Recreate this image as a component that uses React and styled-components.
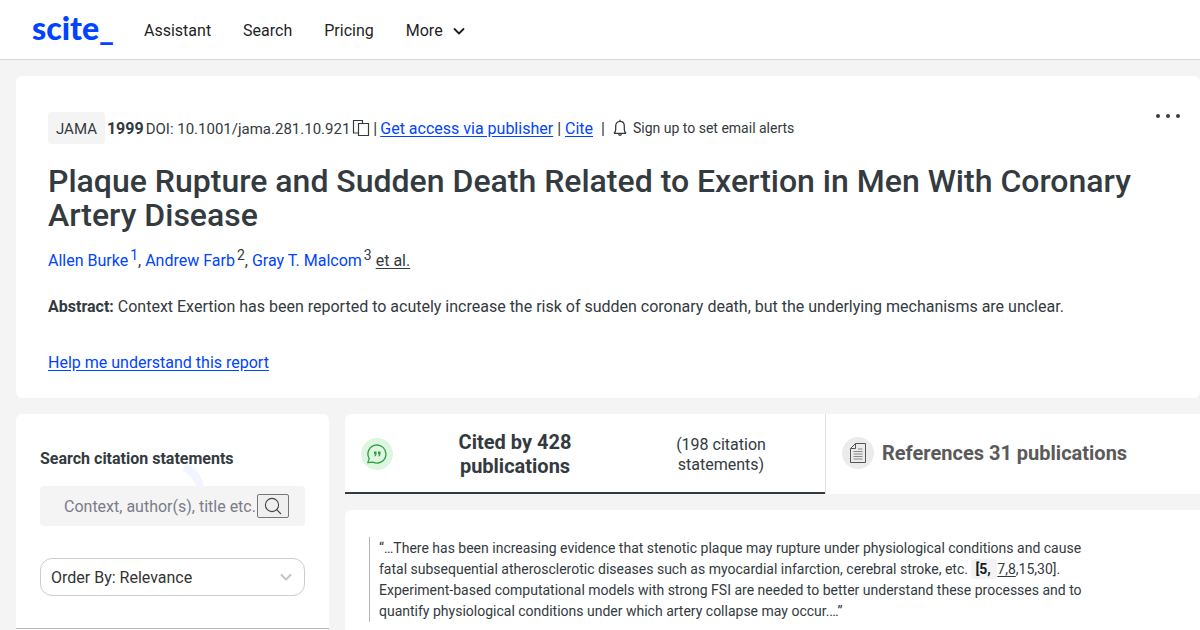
import React from "react";
import styled, { createGlobalStyle, css } from "styled-components";

const GlobalStyle = createGlobalStyle`
  *, *::before, *::after { box-sizing: border-box; }
  body {
    margin: 0;
    background: #f4f4f4;
    color: #333a40;
    font-family: Roboto, "Liberation Sans", Arial, sans-serif;
    font-size: 16px;
    line-height: 24px;
    overflow-x: hidden;
  }
  button, input, select { font: inherit; color: inherit; }
`;

const blue = "#0044ff";

const Header = styled.header`
  display: flex;
  align-items: center;
  height: 60px;
  padding: 0 32px;
  background: #fff;
  border-bottom: 1px solid #d8d8d8;
`;

const Logo = styled.a`
  display: flex;
  width: 80px;
  margin-right: 32px;
  padding-bottom: 4px;
  color: ${blue};
  font: 900 32px/36px Lato, sans-serif;
  text-decoration: none;
`;

const Nav = styled.nav`
  display: flex;
  align-items: center;
  gap: 32px;
  padding-top: 2px;
`;

const navItem = css`
  color: #1f1f1f;
  text-decoration: none;
`;

const NavLink = styled.a`
  ${navItem}
`;

const NavButton = styled.button`
  ${navItem}
  display: flex;
  align-items: center;
  gap: 10px;
  padding: 0;
  border: 0;
  background: none;
`;

const Main = styled.main`
  display: flex;
  flex-direction: column;
  gap: 16px;
  padding: 16px 0 0 16px;
`;

const Paper = styled.article`
  padding: 36px 16px 23px 32px;
  background: #fff;
  border-radius: 6px;
`;

const PaperTop = styled.div`
  display: flex;
  justify-content: space-between;
  align-items: flex-start;
`;

const Meta = styled.div`
  display: flex;
  align-items: baseline;
  gap: 2px;
  white-space: nowrap;

  > button { align-self: center; }
`;

const Journal = styled.span`
  padding: 5px 8px 3px;
  background: #f4f4f4;
  border-radius: 4px;
  font-size: 15px;
`;

const Doi = styled.span`
  font-size: 15px;
`;

const Divider = styled.span`
  margin: 0 ${(p) => p.$space}px;
`;

const IconButton = styled.button`
  display: flex;
  padding: 0;
  border: 0;
  background: none;
`;

const Link = styled.a`
  color: ${(p) => (p.$plain ? "inherit" : blue)};
  text-decoration: ${(p) => (p.$bare ? "none" : "underline")};
  text-underline-offset: 2px;
`;

const AlertButton = styled.button`
  display: flex;
  align-items: center;
  gap: 6px;
  padding: 0;
  border: 0;
  background: none;
  font-size: 14px;
`;

const Title = styled.h1`
  margin: 20px 0 17px;
  font-size: 32px;
  line-height: 34px;
  font-weight: 500;
`;

const Text = styled.p`
  margin: 0 0 ${(p) => p.$after || 0}px;

  sup {
    margin-left: 2px;
    font-size: 14px;
    line-height: 0;
  }
`;

const Columns = styled.div`
  display: grid;
  grid-template-columns: 313px minmax(0, 1fr);
  gap: 16px;
`;

const Sidebar = styled.aside`
  background: #fff;
  border-radius: 6px 6px 0 0;
`;

const Filters = styled.form`
  position: relative;
  padding: 33px 24px 32px;
  border-bottom: 1px solid #b5b5b5;
`;

const Spinner = styled.svg`
  position: absolute;
  left: 124px;
  top: 46px;
`;

const FilterLabel = styled.label`
  position: relative;
  display: block;
  margin-bottom: 15px;
  font-weight: 700;
`;

const SearchBox = styled.div`
  position: relative;
  display: flex;
  align-items: center;
  gap: 2px;
  height: 40px;
  margin-bottom: 32px;
  padding: 0 16px 0 24px;
  background: #f4f4f4;
  border-radius: 4px;

  input {
    flex: 1;
    min-width: 0;
    padding: 2px 0 0;
    border: 0;
    background: none;
    outline: none;
  }
  input::placeholder { color: #7b7b8a; opacity: 1; }

  button {
    display: flex;
    align-items: center;
    justify-content: center;
    width: 32px;
    height: 24px;
    padding: 0;
    border: 1px solid #767676;
    border-radius: 2px;
    background: #efefef;
  }
`;

const SelectBox = styled.div`
  display: grid;
  align-items: center;

  > * { grid-area: 1 / 1; }
  svg { justify-self: end; margin-right: 13px; pointer-events: none; }
`;

const Select = styled.select`
  appearance: none;
  width: 100%;
  height: 38px;
  padding: 2px 32px 0 10px;
  border: 1px solid #ccc;
  border-radius: 12px;
  background: #fff;
  color: #333;
`;

const Results = styled.section`
  display: flex;
  flex-direction: column;
  gap: 16px;
`;

const Tabs = styled.div`
  display: grid;
  grid-template-columns: 480px minmax(0, 1fr);
  height: 80px;
  background: #fff;
  border-radius: 6px 0 0 0;
`;

const Tab = styled.button`
  display: flex;
  align-items: center;
  gap: 8px;
  padding: ${(p) => (p.$active ? "2px 16px 0" : "0 16px 2px")};
  border: 0;
  border-left: ${(p) => (p.$active ? "0" : "1px solid #e0e0e0")};
  border-bottom: ${(p) => (p.$active ? "2px solid #333a40" : "0")};
  background: none;
  color: ${(p) => (p.$active ? "#333a40" : "#5a5a5a")};
`;

const TabIcon = styled.span`
  display: flex;
  align-items: center;
  justify-content: center;
  flex: none;
  width: 32px;
  height: 32px;
  border-radius: 50%;
  background: ${(p) => (p.$green ? "#def5e0" : "#ebebeb")};
`;

const TabTitle = styled.span`
  flex: ${(p) => (p.$wide ? "0 0 228px" : "none")};
  padding: ${(p) => (p.$wide ? "0 52px" : "0")};
  font-size: 20px;
  line-height: 24px;
  font-weight: 700;
`;

const TabNote = styled.span`
  flex: 1;
  padding: 2px 32px 0 28px;
  line-height: 20px;
`;

const Citation = styled.article`
  padding: 27px 24px;
  background: #fff;
  border-radius: 6px 0 0 0;
`;

const Quote = styled.blockquote`
  max-width: 728px;
  margin: 0;
  padding: 1px 0 0 9px;
  border-left: 1px solid #b5b5b5;
  font-size: 14px;
  line-height: 21px;

  mark {
    padding: 2px 3px 2px 4px;
    border-radius: 4px;
    background: #f4f2f2;
    color: #0f1f1c;
    font-weight: 700;
  }
`;

function Chevron({ size, color, width }) {
  return (
    <svg width={size} height={size} viewBox="0 0 12 12" fill="none" stroke={color} strokeWidth={width} strokeLinecap="round" strokeLinejoin="round" aria-hidden="true">
      <path d="M1.5 4 6 8.5 10.5 4" />
    </svg>
  );
}

function CopyIcon() {
  return (
    <svg width="18" height="18" viewBox="0 0 18 18" fill="none" stroke="#333a40" strokeWidth="1.2" aria-hidden="true">
      <path d="M6.5 14H1.5V1.5H10.5V4" />
      <path d="M6.5 4.5H16.5V16.5H6.5Z" />
    </svg>
  );
}

function BellIcon() {
  return (
    <svg width="14" height="18" viewBox="0 0 14 18" fill="none" stroke="#333a40" strokeWidth="1.3" strokeLinejoin="round" aria-hidden="true">
      <path d="M.8 14.300H13.200M1 14.200C2.400 13 2.700 12 2.700 10.500V7C2.700 4.200 4.500 2.300 7 2.300S11.300 4.200 11.300 7V10.500C11.300 12 11.600 13 13 14.200M7 2.300V.8M5.700 14.500C5.700 17 8.300 17 8.300 14.500" />
    </svg>
  );
}

function SearchIcon() {
  return (
    <svg width="18" height="18" viewBox="0 0 18 18" fill="none" stroke="#444" strokeWidth="1.1" aria-hidden="true">
      <circle cx="8" cy="8" r="6.6" />
      <path d="M12.7 12.7 17 17" />
    </svg>
  );
}

function QuoteBubbleIcon() {
  return (
    <svg width="20" height="20" viewBox="0 0 20 20" fill="none" stroke="#2f9e44" strokeWidth="1.3" strokeLinejoin="round" aria-hidden="true">
      <path d="M.8 18.6 2.2 14.6A9 9 0 1 1 6 18.1Z" />
      <g fill="#2f9e44" stroke="none">
        <path d="M7 7.5h2.5v2.2c0 1.500-.7 2.400-2 2.800l-.3-.7c.7-.3 1-.8 1-1.500H7Z" />
        <path d="M11 7.500h2.500v2.200c0 1.500-.7 2.400-2 2.800l-.3-.7c.7-.3 1-.8 1-1.500H11Z" />
      </g>
    </svg>
  );
}

function DocumentIcon() {
  return (
    <svg width="16" height="20" viewBox="0 0 16 20" fill="none" stroke="#555" aria-hidden="true">
      <path d="M5.500.5H15.500V19.500H.5V5.500ZM5.500.5V5.500H.5" />
      <path stroke="#888" d="M8 6H12.500M3.500 8.500H12.500M3.500 11H12.500M3.500 13.500H12.500M3.500 16H12.500" />
    </svg>
  );
}

export default function App() {
  return (
    <>
      <GlobalStyle />
      <Header>
        <Logo href="#">scite_</Logo>
        <Nav>
          <NavLink href="#">Assistant</NavLink>
          <NavLink href="#">Search</NavLink>
          <NavLink href="#">Pricing</NavLink>
          <NavButton type="button">
            More
            <Chevron size={12} color="#1f1f1f" width={1.8} />
          </NavButton>
        </Nav>
      </Header>

      <Main>
        <Paper>
          <PaperTop>
            <Meta>
              <Journal>JAMA</Journal>
              <strong>1999</strong>
              <Doi>DOI: 10.1001/jama.281.10.921</Doi>
              <IconButton type="button" aria-label="Copy DOI"><CopyIcon /></IconButton>
              <Divider $space={1}>|</Divider>
              <Link href="#">Get access via publisher</Link>
              <Divider $space={2}>|</Divider>
              <Link href="#">Cite</Link>
              <Divider $space={6}>|</Divider>
              <AlertButton type="button"><BellIcon />Sign up to set email alerts</AlertButton>
            </Meta>
            <IconButton type="button" aria-label="More options">
              <svg width="32" height="8" viewBox="0 0 32 8" fill="#333a40" aria-hidden="true">
                <circle cx="6" cy="4" r="2" />
                <circle cx="16" cy="4" r="2" />
                <circle cx="26" cy="4" r="2" />
              </svg>
            </IconButton>
          </PaperTop>
          <Title>Plaque Rupture and Sudden Death Related to Exertion in Men With Coronary Artery Disease</Title>
          <Text $after={22}>
            <Link href="#" $bare>Allen Burke<sup>1</sup></Link>, <Link href="#" $bare>Andrew Farb</Link><sup>2</sup>,{" "}
            <Link href="#" $bare>Gray T. Malcom</Link><sup>3</sup> <Link href="#" $plain>et al.</Link>
          </Text>
          <Text $after={32}>
            <strong>Abstract:</strong> Context Exertion has been reported to acutely increase the risk of sudden coronary death, but the underlying mechanisms are unclear.
          </Text>
          <Text><Link href="#">Help me understand this report</Link></Text>
        </Paper>

        <Columns>
          <Sidebar>
            <Filters>
              <Spinner width="66" height="66" viewBox="0 0 66 66" fill="none" stroke="#f2f5ff" strokeWidth="8" aria-hidden="true">
                <path d="M44 7A29 29 0 0 1 61 33" />
              </Spinner>
              <FilterLabel htmlFor="statement-search">Search citation statements</FilterLabel>
              <SearchBox>
                <input id="statement-search" type="text" placeholder="Context, author(s), title etc." />
                <button type="submit" aria-label="Search"><SearchIcon /></button>
              </SearchBox>
              <SelectBox>
                <Select aria-label="Order">
                  <option>Order By: Relevance</option>
                </Select>
                <Chevron size={12} color="#c4c4c4" width={2} />
              </SelectBox>
            </Filters>
          </Sidebar>

          <Results>
            <Tabs>
              <Tab type="button" $active>
                <TabIcon $green><QuoteBubbleIcon /></TabIcon>
                <TabTitle $wide>Cited by 428 publications</TabTitle>
                <TabNote>(198 citation statements)</TabNote>
              </Tab>
              <Tab type="button">
                <TabIcon><DocumentIcon /></TabIcon>
                <TabTitle>References 31 publications</TabTitle>
              </Tab>
            </Tabs>
            <Citation>
              <Quote>
                “…There has been increasing evidence that stenotic plaque may rupture under physiological conditions and cause fatal subsequential atherosclerotic diseases such as myocardial infarction, cerebral stroke, etc. <mark>[5, </mark><Link href="#" $plain>7,</Link><Link href="#" $plain>8</Link>,15,30]. Experiment-based computational models with strong FSI are needed to better understand these processes and to quantify physiological conditions under which artery collapse may occur.…”
              </Quote>
            </Citation>
          </Results>
        </Columns>
      </Main>
    </>
  );
}
